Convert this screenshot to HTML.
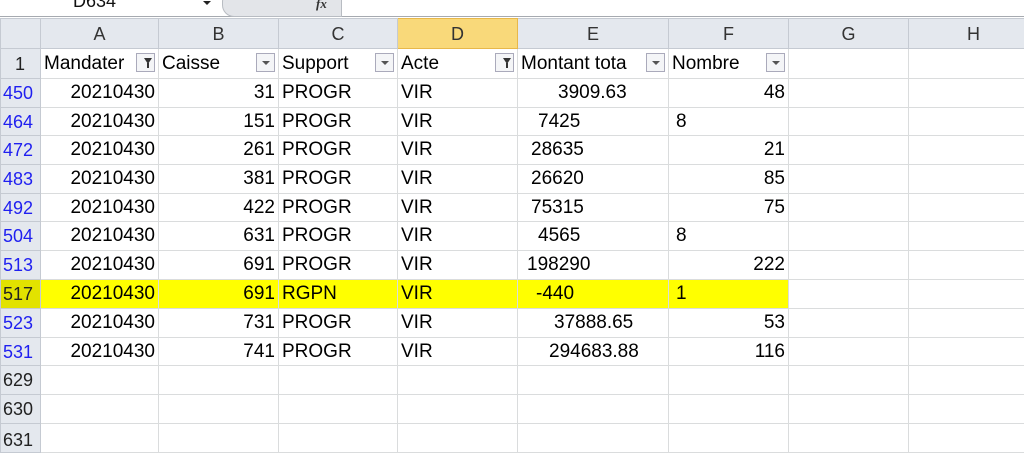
<!DOCTYPE html>
<html><head><style>
body{margin:0;width:1024px;height:438px;overflow:hidden;background:#fff;font-family:"Liberation Sans",sans-serif;position:relative}
.a{position:absolute}
table{position:absolute;left:0;top:18px;width:1038px;border-collapse:collapse;table-layout:fixed;font-size:19px;color:#000}
td{border:1px solid #dadcdd;padding:0 3px;white-space:nowrap;overflow:visible;position:relative;box-sizing:border-box;line-height:20px}
tr.h td{background:#e4e8ee;text-align:center;color:#333;border-color:#c5cad2;font-size:18px}
tr.t td{overflow:hidden}
td.rh{background:#e4e8ee;color:#1f1ff0;text-align:left;padding-left:2px;border-color:#c5cad2;font-size:18px}
td.rh.k{color:#222}
td.r{text-align:right}
.dd{position:absolute;right:3px;top:4px;width:19px;height:19px;border:1px solid #aab;background:#f4f5f7;box-sizing:border-box}
.dd:after{content:"";position:absolute;left:5px;top:7px;border-left:4px solid transparent;border-right:4px solid transparent;border-top:4px solid #555}
.dd.f:after{left:7px;top:4px;border-left:4px solid transparent;border-right:4px solid transparent;border-top:6px solid #333}
.dd.f:before{content:"";position:absolute;left:10px;top:9px;width:2px;height:5px;background:#333}
tr.y td{background:#ffff00}
</style></head><body>
<div class="a" style="left:0;top:0;width:1024px;height:16px;border-bottom:1px solid #a6aab0"></div>
<div class="a" style="left:73px;top:-9px;font-size:18px;color:#111">D634</div>
<div class="a" style="left:203px;top:1px;border-left:4px solid transparent;border-right:4px solid transparent;border-top:4px solid #222"></div>
<div class="a" style="left:222px;top:-10px;width:118px;height:25px;background:#e3e5e9;border:1px solid #b8bcc2;border-radius:12px 0 0 12px"></div>
<div class="a" style="left:316px;top:-4px;font-style:italic;font-family:'Liberation Serif',serif;font-size:13px;font-weight:bold;color:#333">fx</div>
<table>
<colgroup><col style="width:40px"><col style="width:118px"><col style="width:120px"><col style="width:119px"><col style="width:120px"><col style="width:151px"><col style="width:120px"><col style="width:120px"><col style="width:130px"></colgroup>
<tr class="h" style="height:30px"><td style="background:#e4e8ee"></td><td>A</td><td>B</td><td>C</td><td style="background:#f9d97a;border-color:#e8b84a">D</td><td>E</td><td>F</td><td>G</td><td>H</td></tr>
<tr class="t" style="height:30px"><td class="rh k" style="text-align:center">1</td><td>Mandater<span class="dd f"></span></td><td>Caisse<span class="dd"></span></td><td>Support<span class="dd"></span></td><td>Acte<span class="dd f"></span></td><td>Montant tota<span class="dd"></span></td><td>Nombre<span class="dd"></span></td><td></td><td></td></tr>
<tr style="height:29px"><td class="rh">450</td><td class="r">20210430</td><td class="r">31</td><td>PROGR</td><td>VIR</td><td style="padding-left:40px">3909.63</td><td class="r">48</td><td></td><td></td></tr>
<tr style="height:28px"><td class="rh">464</td><td class="r">20210430</td><td class="r">151</td><td>PROGR</td><td>VIR</td><td style="padding-left:20px">7425</td><td style="padding-left:7px">8</td><td></td><td></td></tr>
<tr style="height:29px"><td class="rh">472</td><td class="r">20210430</td><td class="r">261</td><td>PROGR</td><td>VIR</td><td style="padding-left:13px">28635</td><td class="r">21</td><td></td><td></td></tr>
<tr style="height:29px"><td class="rh">483</td><td class="r">20210430</td><td class="r">381</td><td>PROGR</td><td>VIR</td><td style="padding-left:13px">26620</td><td class="r">85</td><td></td><td></td></tr>
<tr style="height:28px"><td class="rh">492</td><td class="r">20210430</td><td class="r">422</td><td>PROGR</td><td>VIR</td><td style="padding-left:13px">75315</td><td class="r">75</td><td></td><td></td></tr>
<tr style="height:29px"><td class="rh">504</td><td class="r">20210430</td><td class="r">631</td><td>PROGR</td><td>VIR</td><td style="padding-left:20px">4565</td><td style="padding-left:7px">8</td><td></td><td></td></tr>
<tr style="height:29px"><td class="rh">513</td><td class="r">20210430</td><td class="r">691</td><td>PROGR</td><td>VIR</td><td style="padding-left:9px">198290</td><td class="r">222</td><td></td><td></td></tr>
<tr class="y" style="height:29px"><td class="rh k" style="background:#e2e200">517</td><td class="r">20210430</td><td class="r">691</td><td>RGPN</td><td>VIR</td><td style="padding-left:18px">-440</td><td style="padding-left:7px">1</td><td style="background:#fff"></td><td style="background:#fff"></td></tr>
<tr style="height:29px"><td class="rh">523</td><td class="r">20210430</td><td class="r">731</td><td>PROGR</td><td>VIR</td><td style="padding-left:36px">37888.65</td><td class="r">53</td><td></td><td></td></tr>
<tr style="height:28px"><td class="rh">531</td><td class="r">20210430</td><td class="r">741</td><td>PROGR</td><td>VIR</td><td style="padding-left:31px">294683.88</td><td class="r">116</td><td></td><td></td></tr>
<tr style="height:29px"><td class="rh k">629</td><td></td><td></td><td></td><td></td><td></td><td></td><td></td><td></td></tr>
<tr style="height:29px"><td class="rh k">630</td><td></td><td></td><td></td><td></td><td></td><td></td><td></td><td></td></tr>
<tr style="height:29px"><td class="rh k" style="vertical-align:top;padding-top:6px">631</td><td></td><td></td><td></td><td></td><td></td><td></td><td></td><td></td></tr>
</table>
</body></html>
